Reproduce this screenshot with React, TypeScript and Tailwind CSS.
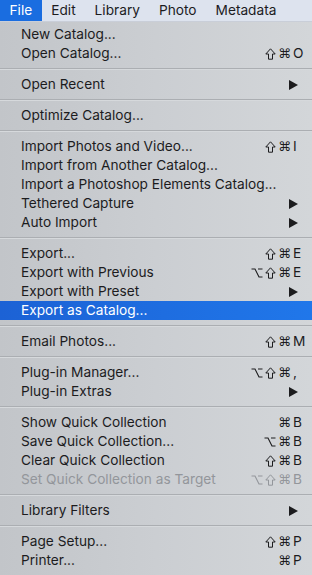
type Item = {
  label: string;
  keys?: string;
  sub?: boolean;
  disabled?: boolean;
  active?: boolean;
};

type Group = Item[];

const groups: Group[] = [
  [{ label: "New Catalog..." }, { label: "Open Catalog...", keys: "⇧⌘O" }],
  [{ label: "Open Recent", sub: true }],
  [{ label: "Optimize Catalog..." }],
  [
    { label: "Import Photos and Video...", keys: "⇧⌘I" },
    { label: "Import from Another Catalog..." },
    { label: "Import a Photoshop Elements Catalog..." },
    { label: "Tethered Capture", sub: true },
    { label: "Auto Import", sub: true },
  ],
  [
    { label: "Export...", keys: "⇧⌘E" },
    { label: "Export with Previous", keys: "⌥⇧⌘E" },
    { label: "Export with Preset", sub: true },
    { label: "Export as Catalog...", active: true },
  ],
  [{ label: "Email Photos...", keys: "⇧⌘M" }],
  [
    { label: "Plug-in Manager...", keys: "⌥⇧⌘," },
    { label: "Plug-in Extras", sub: true },
  ],
  [
    { label: "Show Quick Collection", keys: "⌘B" },
    { label: "Save Quick Collection...", keys: "⌥⌘B" },
    { label: "Clear Quick Collection", keys: "⇧⌘B" },
    { label: "Set Quick Collection as Target", keys: "⌥⇧⌘B", disabled: true },
  ],
  [{ label: "Library Filters", sub: true }],
  [{ label: "Page Setup...", keys: "⇧⌘P" }, { label: "Printer...", keys: "⌘P" }],
];

const menus = ["File", "Edit", "Library", "Photo", "Metadata"];

// modifier glyphs drawn as svg, the fonts here draw them too small
const Shift = () => (
  <svg width="11" height="12" viewBox="0 0 11 12" className="mx-[1px]">
    <path
      d="M5.5 0.8 L10.2 6 H7.5 V11.2 H3.5 V6 H0.8 Z"
      fill="none"
      stroke="currentColor"
      strokeWidth="1"
      strokeLinejoin="miter"
    />
  </svg>
);

const Option = () => (
  <svg width="12" height="10" viewBox="0 0 12 10" className="mx-[1px]">
    <path
      d="M0.5 1 H4 L8 9 H11.5 M7 1 H11.5"
      fill="none"
      stroke="currentColor"
      strokeWidth="1.1"
    />
  </svg>
);

const Keys = ({ keys }: { keys: string }) => (
  <span className="flex items-center">
    {keys.split("").map((k, i) => {
      if (k === "⇧") return <Shift key={i} />;
      if (k === "⌥") return <Option key={i} />;
      if (k === "⌘")
        return (
          <span key={i} className="font-['DejaVu_Sans',sans-serif] text-[13px] mx-[1px]">
            ⌘
          </span>
        );
      return (
        <span key={i} className="ml-[1px] w-[11px] text-left">
          {k}
        </span>
      );
    })}
  </span>
);

const Row = ({ item }: { item: Item }) => {
  const color = item.active
    ? "text-white"
    : item.disabled
      ? "text-[#93969b]"
      : "text-[#1c1c1e]";
  return (
    <div
      className={`h-[19px] pt-[1px] flex items-center justify-between pl-[21px] pr-[8px] ${color} ${
        item.active ? "bg-gradient-to-r from-[#1c62d5] to-[#2077ea]" : ""
      }`}
    >
      <span className="whitespace-nowrap">{item.label}</span>
      {item.keys && <Keys keys={item.keys} />}
      {item.sub && (
        <svg width="9" height="10" viewBox="0 0 9 10" className="mr-[6px]">
          <path d="M0 0 L9 5 L0 10 Z" fill="#1c1c1e" />
        </svg>
      )}
    </div>
  );
};

export default function App() {
  return (
    <div className="w-[312px] h-[575px] overflow-hidden font-['Inter',sans-serif] text-[13.7px] leading-none">
      <div className="h-[22px] bg-[#dde3ee] flex items-center text-[#1c1c1e] border-b border-[#c9ced8] whitespace-nowrap">
        {menus.map((m, i) => (
          <div
            key={m}
            className={`h-full flex items-center px-[9.5px] ${
              i === 0 ? "bg-[#1a6de0] text-white" : ""
            }`}
          >
            {m}
          </div>
        ))}
      </div>
      <div className="h-[553px] pt-[3px] bg-gradient-to-r from-[#c2c5c9] via-[#cbced2] to-[#d3d6d9]">
        {groups.map((g, gi) => (
          <div key={gi}>
            {gi > 0 && (
              <div className="h-[12px] flex flex-col justify-center">
                <div className="h-[2px] border-t border-[#abaeb2] bg-[#d6d9dc]" />
              </div>
            )}
            {g.map((item) => (
              <Row key={item.label} item={item} />
            ))}
          </div>
        ))}
      </div>
    </div>
  );
}
